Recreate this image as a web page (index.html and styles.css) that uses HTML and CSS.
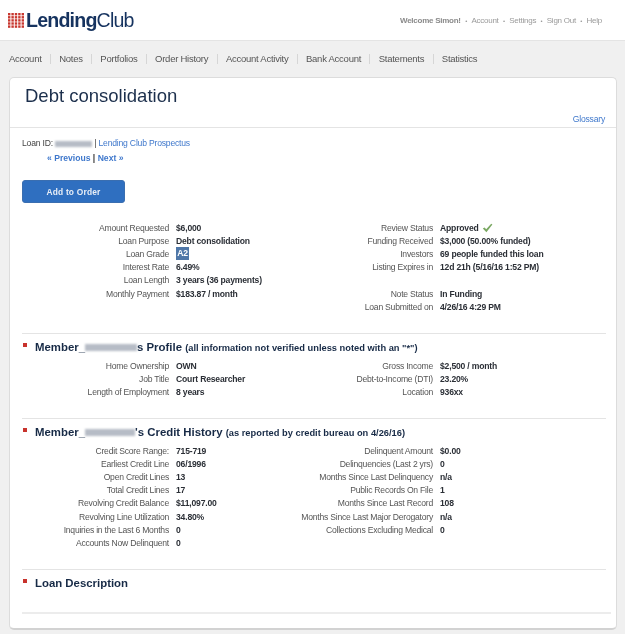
FILE: index.html
```html
<!DOCTYPE html>
<html lang="en">
<head>
<meta charset="utf-8">
<title>Debt consolidation</title>
<link rel="stylesheet" href="styles.css">
</head>
<body>
<header class="top">
  <div class="logo">
    <svg class="logo-mark" width="16" height="15" viewBox="0 0 16 15">
      <g fill="#c8372f">
        <rect x="0" y="0" width="2.4" height="2.4"/><rect x="3.4" y="0" width="2.4" height="2.4"/><rect x="6.8" y="0" width="2.4" height="2.4"/><rect x="10.2" y="0" width="2.4" height="2.4"/><rect x="13.6" y="0" width="2.4" height="2.4"/>
        <rect x="0" y="3.1" width="2.4" height="2.4"/><rect x="3.4" y="3.1" width="2.4" height="2.4"/><rect x="6.8" y="3.1" width="2.4" height="2.4"/><rect x="10.2" y="3.1" width="2.4" height="2.4"/><rect x="13.6" y="3.1" width="2.4" height="2.4"/>
        <rect x="0" y="6.2" width="2.4" height="2.4"/><rect x="3.4" y="6.2" width="2.4" height="2.4"/><rect x="6.8" y="6.2" width="2.4" height="2.4"/><rect x="10.2" y="6.2" width="2.4" height="2.4"/><rect x="13.6" y="6.2" width="2.4" height="2.4"/>
        <rect x="0" y="9.3" width="2.4" height="2.4"/><rect x="3.4" y="9.3" width="2.4" height="2.4"/><rect x="6.8" y="9.3" width="2.4" height="2.4"/><rect x="10.2" y="9.3" width="2.4" height="2.4"/><rect x="13.6" y="9.3" width="2.4" height="2.4"/>
        <rect x="0" y="12.4" width="2.4" height="2.4"/><rect x="3.4" y="12.4" width="2.4" height="2.4"/><rect x="6.8" y="12.4" width="2.4" height="2.4"/><rect x="10.2" y="12.4" width="2.4" height="2.4"/><rect x="13.6" y="12.4" width="2.4" height="2.4"/>
      </g>
    </svg>
    <span class="logo-text"><b>Lending</b>Club</span>
  </div>
  <nav class="util">
    <b>Welcome Simon!</b><i>•</i><a>Account</a><i>•</i><a>Settings</a><i>•</i><a>Sign Out</a><i>•</i><a>Help</a>
  </nav>
</header>

<nav class="tabs">
  <a>Account</a><a>Notes</a><a>Portfolios</a><a>Order History</a><a>Account Activity</a><a>Bank Account</a><a>Statements</a><a>Statistics</a>
</nav>

<main class="card">
  <div class="card-head">
    <h1>Debt consolidation</h1>
    <a class="link glossary">Glossary</a>
  </div>
  <div class="card-body">
    <p class="loan-id">Loan ID: <span class="redact redact-id"></span> | <a class="link">Lending Club Prospectus</a></p>
    <p class="pager"><a class="link">« Previous</a> | <a class="link">Next »</a></p>
    <button class="add" type="button">Add to Order</button>

    <section class="facts facts-summary">
      <dl>
        <div><dt>Amount Requested</dt><dd>$6,000</dd></div>
        <div><dt>Loan Purpose</dt><dd>Debt consolidation</dd></div>
        <div><dt>Loan Grade</dt><dd><span class="grade">A2</span></dd></div>
        <div><dt>Interest Rate</dt><dd>6.49%</dd></div>
        <div><dt>Loan Length</dt><dd>3 years (36 payments)</dd></div>
        <div><dt>Monthly Payment</dt><dd>$183.87 / month</dd></div>
      </dl>
      <dl>
        <div><dt>Review Status</dt><dd>Approved <svg class="check" width="11" height="10" viewBox="0 0 11 10"><path d="M0.8 5.6 L2.6 4.4 L4.2 6.2 L9.2 0.8 L10.4 1.6 L4.4 9.2 Z" fill="#7aa862"/></svg></dd></div>
        <div><dt>Funding Received</dt><dd>$3,000 (50.00% funded)</dd></div>
        <div><dt>Investors</dt><dd>69 people funded this loan</dd></div>
        <div><dt>Listing Expires in</dt><dd>12d 21h (5/16/16 1:52 PM)</dd></div>
        <div class="blank"></div>
        <div><dt>Note Status</dt><dd>In Funding</dd></div>
        <div><dt>Loan Submitted on</dt><dd>4/26/16 4:29 PM</dd></div>
      </dl>
    </section>

    <section class="block block-profile">
      <h2>Member_<span class="redact redact-name"></span>s Profile <small>(all information not verified unless noted with an "*")</small></h2>
      <div class="facts">
        <dl>
          <div><dt>Home Ownership</dt><dd>OWN</dd></div>
          <div><dt>Job Title</dt><dd>Court Researcher</dd></div>
          <div><dt>Length of Employment</dt><dd>8 years</dd></div>
        </dl>
        <dl>
          <div><dt>Gross Income</dt><dd>$2,500 / month</dd></div>
          <div><dt>Debt-to-Income (DTI)</dt><dd>23.20%</dd></div>
          <div><dt>Location</dt><dd>936xx</dd></div>
        </dl>
      </div>
    </section>

    <section class="block block-credit">
      <h2>Member_<span class="redact redact-name2"></span>'s Credit History <small>(as reported by credit bureau on 4/26/16)</small></h2>
      <div class="facts">
        <dl>
          <div><dt>Credit Score Range:</dt><dd>715-719</dd></div>
          <div><dt>Earliest Credit Line</dt><dd>06/1996</dd></div>
          <div><dt>Open Credit Lines</dt><dd>13</dd></div>
          <div><dt>Total Credit Lines</dt><dd>17</dd></div>
          <div><dt>Revolving Credit Balance</dt><dd>$11,097.00</dd></div>
          <div><dt>Revolving Line Utilization</dt><dd>34.80%</dd></div>
          <div><dt>Inquiries in the Last 6 Months</dt><dd>0</dd></div>
          <div><dt>Accounts Now Delinquent</dt><dd>0</dd></div>
        </dl>
        <dl>
          <div><dt>Delinquent Amount</dt><dd>$0.00</dd></div>
          <div><dt>Delinquencies (Last 2 yrs)</dt><dd>0</dd></div>
          <div><dt>Months Since Last Delinquency</dt><dd>n/a</dd></div>
          <div><dt>Public Records On File</dt><dd>1</dd></div>
          <div><dt>Months Since Last Record</dt><dd>108</dd></div>
          <div><dt>Months Since Last Major Derogatory</dt><dd>n/a</dd></div>
          <div><dt>Collections Excluding Medical</dt><dd>0</dd></div>
        </dl>
      </div>
    </section>

    <section class="block block-desc">
      <h2>Loan Description</h2>
    </section>
    <div class="end-rule"></div>
  </div>
</main>
</body>
</html>
```
FILE: styles.css
```css
* { box-sizing: border-box; }
html, body { margin: 0; padding: 0; }
body {
  width: 625px;
  height: 634px;
  overflow: hidden;
  background: #f0f0f0;
  font-family: "Liberation Sans", Arial, sans-serif;
  color: #333;
  font-size: 8.6px;
  letter-spacing: -0.2px;
  filter: blur(0.3px);
}
a { color: inherit; text-decoration: none; }
.link { color: #3f78cc; }

.top {
  height: 41px;
  background: #fff;
  border-bottom: 1px solid #e4e4e4;
  display: flex;
  align-items: center;
  justify-content: space-between;
  padding: 0 23px 0 8px;
}
.logo { display: flex; align-items: center; gap: 2px; }
.logo-mark { display: block; }
.logo-text {
  font-size: 19.6px;
  letter-spacing: -0.8px;
  color: #16335f;
}
.logo-text b { font-weight: 700; }
.util { font-size: 8px; letter-spacing: -0.25px; color: #9a9a9a; display: flex; align-items: center; margin-top: 1px; }
.util b { color: #8a8a8a; }
.util i { font-style: normal; font-size: 6px; margin: 0 4.4px; }

.tabs {
  height: 36px;
  display: flex;
  align-items: center;
  padding-left: 9px;
  font-size: 9.5px;
  letter-spacing: -0.25px;
  color: #555;
}
.tabs a { padding-right: 8.3px; margin-right: 8.3px; border-right: 1px solid #d6d6d6; line-height: 10px; }
.tabs a:last-child { border-right: 0; }

.card {
  margin: 0 8px 0 9px;
  height: 553px;
  background: #fff;
  border: 1px solid #dcdcdc;
  border-bottom: 2px solid #d2d2d2;
  border-radius: 5px;
}
.card-head {
  height: 50px;
  border-bottom: 1px solid #e4e4e4;
  padding: 6px 11px 0 15px;
  display: flex;
  justify-content: space-between;
}
h1 {
  margin: 0;
  font-size: 18.5px;
  line-height: 23px;
  font-weight: 400;
  letter-spacing: 0;
  color: #1c2f4c;
}
.glossary { align-self: flex-end; margin-bottom: 3px; }

.card-body { padding: 10px 5px 0 12px; }
.loan-id, .pager { margin: 0; line-height: 11px; }
.loan-id { color: #444; }
.pager { margin: 4px 0 0 25px; font-weight: 700; letter-spacing: 0; }
.redact {
  display: inline-block;
  background: #b6bcc6;
  filter: blur(1px);
  vertical-align: middle;
}
.redact-id { width: 37px; height: 6px; }
.redact-name { width: 52px; height: 7px; }
.redact-name2 { width: 50px; height: 7px; }

.add {
  display: block;
  margin: 16px 0 0;
  width: 103px;
  height: 23px;
  background: #2f6fc0;
  border: 1px solid #3a6eb0;
  border-radius: 3px;
  color: #e8eef6;
  font: 700 8.4px "Liberation Sans", Arial, sans-serif;
  letter-spacing: 0.2px;
}

.facts { display: grid; grid-template-columns: 264px 1fr; margin-right: 5px; }
.facts-summary { margin-top: 18px; height: 112px; }
dl { margin: 0; }
dl > div {
  display: grid;
  grid-template-columns: 147px 1fr;
  column-gap: 7px;
  height: 13.2px;
  align-items: center;
}
dl > .blank { height: 13.2px; }
dt { text-align: right; color: #555; white-space: nowrap; letter-spacing: -0.23px; }
dd { margin: 0; font-weight: 700; color: #2b2f36; white-space: nowrap; display: flex; align-items: center; gap: 3px; letter-spacing: -0.19px; }
.grade {
  display: inline-block;
  width: 13px;
  height: 13px;
  background: #4f77a8;
  color: #fff;
  text-align: center;
  line-height: 12px;
}
.check { display: block; margin-top: 1px; }

.block { border-top: 1px solid #e4e4e4; margin-right: 5px; }
h2 {
  margin: 0;
  padding-left: 13px;
  font-size: 11.4px;
  line-height: 14px;
  font-weight: 700;
  letter-spacing: 0;
  color: #172a46;
  position: relative;
  white-space: nowrap;
}
h2::before {
  content: "";
  position: absolute;
  left: 1px;
  top: 3px;
  width: 4px;
  height: 4px;
  background: #c8322c;
}
h2 small { font-size: 9.3px; }
.block-profile { padding-top: 6px; height: 85px; }
.block-profile .facts, .block-credit .facts { margin-top: 4px; margin-right: 0; }
.block-credit { padding-top: 6px; height: 151px; }
.block-desc { padding-top: 6px; height: 43px; }
.end-rule { height: 2px; background: #ececec; }
```
